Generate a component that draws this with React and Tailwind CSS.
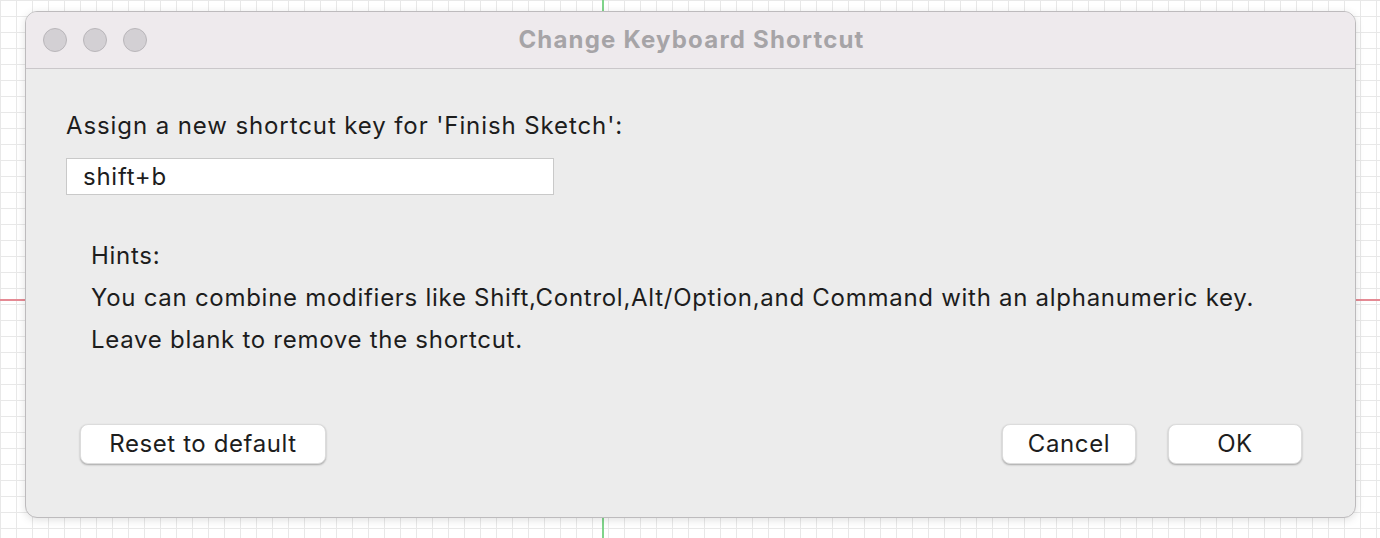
export default function App() {
  const font = { fontFamily: 'Inter, "Liberation Sans", Arial, sans-serif' };
  return (
    <div
      className="relative w-[1380px] h-[538px] overflow-hidden bg-white bg-[linear-gradient(to_right,#e8e8e8_1px,transparent_1px),linear-gradient(to_bottom,#e8e8e8_1px,transparent_1px)] bg-size-[16px_16px] pt-[11px] pl-[25px]"
      style={font}
    >
      <div className="absolute left-0 right-0 top-[299px] h-[2px] bg-[#e58a94]" />
      <div className="absolute top-0 bottom-0 left-[602px] w-[2px] bg-[#7fd48a]" />
      <div className="relative w-[1331px] h-[507px] rounded-[12px] border border-[#bdbbbd] bg-[#ececec] shadow-[0_2px_8px_rgba(0,0,0,0.12)] overflow-hidden flex flex-col">
        <div className="h-[57px] shrink-0 bg-[#eeeaed] border-b border-[#cac7ca] relative flex items-center justify-center">
          <div className="absolute left-[17px] top-[16px] flex gap-[16px]">
            <div className="w-[24px] h-[24px] rounded-full bg-[#d3d0d4] border border-[#b9b6ba]" />
            <div className="w-[24px] h-[24px] rounded-full bg-[#d3d0d4] border border-[#b9b6ba]" />
            <div className="w-[24px] h-[24px] rounded-full bg-[#d3d0d4] border border-[#b9b6ba]" />
          </div>
          <div className="text-[24px] font-bold tracking-[1.2px] text-[#a6a4a7] ml-[2px]">Change Keyboard Shortcut</div>
        </div>
        <div className="flex-1 flex flex-col pl-[40px] pr-[53px]">
          <div className="mt-[44px] text-[24px] leading-[26px] tracking-[0.9px] text-[#1d1d1d]">Assign a new shortcut key for 'Finish Sketch':</div>
          <div className="mt-[19px] w-[488px] h-[37px] bg-white border border-[#c9c9c9] flex items-center pl-[16px] text-[24px] tracking-[0.75px] text-[#1d1d1d]">shift+b</div>
          <div className="mt-[40px] pl-[25px] text-[24px] leading-[42px] tracking-[0.72px] text-[#1d1d1d]">
            <div>Hints:</div>
            <div>You can combine modifiers like Shift,Control,Alt/Option,and Command with an alphanumeric key.</div>
            <div>Leave blank to remove the shortcut.</div>
          </div>
          <div className="mt-[63px] flex items-center pl-[14px]">
            <button className="w-[246px] h-[40px] rounded-[8px] bg-white shadow-[0_1px_2px_rgba(0,0,0,0.3)] border border-[#dcdcdc] text-[24px] tracking-[0.6px] text-[#1d1d1d]" style={font}>Reset to default</button>
            <div className="flex-1" />
            <button className="w-[134px] h-[40px] rounded-[8px] bg-white shadow-[0_1px_2px_rgba(0,0,0,0.3)] border border-[#dcdcdc] text-[24px] tracking-[0.6px] text-[#1d1d1d]" style={font}>Cancel</button>
            <button className="ml-[32px] w-[134px] h-[40px] rounded-[8px] bg-white shadow-[0_1px_2px_rgba(0,0,0,0.3)] border border-[#dcdcdc] text-[24px] tracking-[0.6px] text-[#1d1d1d]" style={font}>OK</button>
          </div>
        </div>
      </div>
    </div>
  );
}
